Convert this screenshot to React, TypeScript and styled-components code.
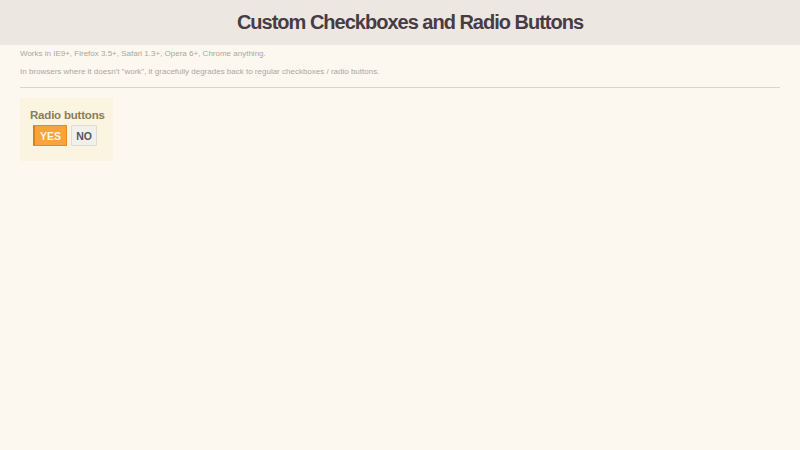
import React, { useState } from "react";
import styled, { createGlobalStyle } from "styled-components";

const GlobalStyle = createGlobalStyle`
  html, body {
    margin: 0;
    padding: 0;
    background: #fdf8ef;
    font-family: "Liberation Sans", Arial, sans-serif;
  }
`;

const Header = styled.header`
  height: 45px;
  background: #ede7e1;
  display: flex;
  align-items: center;
  justify-content: center;
  padding-left: 20px;
`;

const Title = styled.h1`
  margin: 0;
  font-size: 20px;
  font-weight: bold;
  letter-spacing: -1px;
  color: #473c45;
`;

const Main = styled.main`
  padding: 0 20px;
`;

const Note = styled.p`
  margin: 0;
  font-size: 8px;
  line-height: 18px;
  color: #aaa6a0;
`;

const Rule = styled.hr`
  margin: 6px 0 10px;
  border: 0;
  border-top: 1px solid #d9d4cd;
`;

const Group = styled.fieldset`
  display: inline-flex;
  flex-direction: column;
  align-items: flex-start;
  margin: 0;
  border: 0;
  padding: 11px 8px 15px 10px;
  background: #faf4e1;
`;

const Legend = styled.div`
  font-size: 11.5px;
  font-weight: bold;
  color: #8c7c5a;
  margin-bottom: 4px;
  letter-spacing: -0.2px;
`;

const Options = styled.div`
  display: flex;
  gap: 4px;
  padding-left: 3px;
`;

const Option = styled.button<{ $on: boolean }>`
  height: 21px;
  padding: 0 4px;
  font-family: inherit;
  font-size: 10.5px;
  font-weight: bold;
  cursor: pointer;
  border-radius: 1px;
  color: ${(p) => (p.$on ? "#fff6e6" : "#555")};
  background: ${(p) => (p.$on ? "#f8a33c" : "#f2f0ed")};
  border: 1px solid ${(p) => (p.$on ? "#e08c2a" : "#dedad4")};
  border-left: ${(p) => (p.$on ? "2px solid #d9801f" : "1px solid #dedad4")};
  width: ${(p) => (p.$on ? "34px" : "26px")};
`;

export default function App() {
  const [value, setValue] = useState("yes");
  return (
    <>
      <GlobalStyle />
      <Header>
        <Title>Custom Checkboxes and Radio Buttons</Title>
      </Header>
      <Main>
        <Note>Works in IE9+, Firefox 3.5+, Safari 1.3+, Opera 6+, Chrome anything.</Note>
        <Note>
          In browsers where it doesn't "work", it gracefully degrades back to regular
          checkboxes / radio buttons.
        </Note>
        <Rule />
        <Group>
          <Legend>Radio buttons</Legend>
          <Options>
            <Option $on={value === "yes"} onClick={() => setValue("yes")}>
              YES
            </Option>
            <Option $on={value === "no"} onClick={() => setValue("no")}>
              NO
            </Option>
          </Options>
        </Group>
      </Main>
    </>
  );
}
